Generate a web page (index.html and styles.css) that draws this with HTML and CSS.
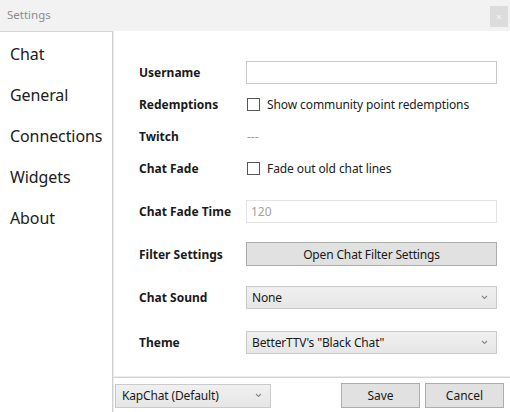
FILE: index.html
```html
<!DOCTYPE html>
<html>
<head>
<meta charset="utf-8">
<link rel="stylesheet" href="styles.css">
</head>
<body>
<div class="window">
  <div class="titlebar">
    <span class="title">Settings</span>
    <span class="close">×</span>
  </div>
  <div class="main">
    <nav class="nav">
      <div class="nav-item">Chat</div>
      <div class="nav-item">General</div>
      <div class="nav-item">Connections</div>
      <div class="nav-item">Widgets</div>
      <div class="nav-item">About</div>
    </nav>
    <div class="pane">
      <div class="form">
        <div class="row r1">
          <div class="label">Username</div>
          <div class="control"><div class="textbox"></div></div>
        </div>
        <div class="row">
          <div class="label">Redemptions</div>
          <div class="control"><span class="check"></span><span class="check-text">Show community point redemptions</span></div>
        </div>
        <div class="row">
          <div class="label">Twitch</div>
          <div class="control"><span class="dim">---</span></div>
        </div>
        <div class="row">
          <div class="label">Chat Fade</div>
          <div class="control"><span class="check"></span><span class="check-text">Fade out old chat lines</span></div>
        </div>
        <div class="row gap">
          <div class="label">Chat Fade Time</div>
          <div class="control"><div class="textbox disabled">120</div></div>
        </div>
        <div class="row gap">
          <div class="label">Filter Settings</div>
          <div class="control"><div class="button wide">Open Chat Filter Settings</div></div>
        </div>
        <div class="row gap">
          <div class="label">Chat Sound</div>
          <div class="control"><div class="select"><span>None</span><span class="chev"><svg width="7" height="5" viewBox="0 0 7 5"><path d="M1 1l2.5 2.5 2.5-2.5" fill="none" stroke="#8a8a8a" stroke-width="1.1"/></svg></span></div></div>
        </div>
        <div class="row gap2">
          <div class="label">Theme</div>
          <div class="control"><div class="select"><span>BetterTTV's "Black Chat"</span><span class="chev"><svg width="7" height="5" viewBox="0 0 7 5"><path d="M1 1l2.5 2.5 2.5-2.5" fill="none" stroke="#8a8a8a" stroke-width="1.1"/></svg></span></div></div>
        </div>
      </div>
      <div class="bottombar">
        <div class="select preset"><span>KapChat (Default)</span><span class="chev"><svg width="7" height="5" viewBox="0 0 7 5"><path d="M1 1l2.5 2.5 2.5-2.5" fill="none" stroke="#8a8a8a" stroke-width="1.1"/></svg></span></div>
        <div class="buttons">
          <div class="button small">Save</div>
          <div class="button small">Cancel</div>
        </div>
      </div>
    </div>
  </div>
</div>
</body>
</html>
```
FILE: styles.css
```css
html, body {
  margin: 0;
  padding: 0;
  background: #ffffff;
}
body {
  font-family: "Noto Sans", "Open Sans", "Liberation Sans", sans-serif;
  color: #1b1b1b;
  font-size: 12px;
}
.window {
  width: 510px;
  height: 412px;
  display: flex;
  flex-direction: column;
  overflow: hidden;
}
.titlebar {
  height: 31px;
  background: #f2f2f2;
  display: flex;
  align-items: center;
  justify-content: space-between;
  padding-left: 7px;
  box-sizing: border-box;
  flex: none;
}
.title {
  color: #8c8c8c;
  font-size: 11.5px;
  margin-top: -2px;
}
.close {
  width: 18px;
  height: 21px;
  margin-right: 2px;
  background: #dcdcdc;
  color: #f4f4f4;
  font-size: 11px;
  display: flex;
  align-items: center;
  justify-content: center;
  margin-top: 2px;
}
.main {
  flex: 1;
  display: flex;
  min-height: 0;
}
.nav {
  width: 113px;
  flex: none;
  box-sizing: border-box;
  border-top: 1px solid #d6d6d6;
  border-right: 1px solid #cfcfcf;
  box-shadow: 1px 0 0 #ececec;
  padding-top: 10px;
  padding-left: 10px;
}
.nav-item {
  font-size: 16px;
  height: 41px;
  line-height: 25px;
  color: #202020;
  letter-spacing: -0.1px;
}
.pane {
  flex: 1;
  display: flex;
  flex-direction: column;
  min-width: 0;
}
.form {
  flex: 1;
  padding: 25px 13px 0 26px;
}
.row {
  display: flex;
  align-items: center;
  height: 32px;
}
.row.gap { margin-top: 11px; }
.row.gap2 { margin-top: 13px; }
.label {
  width: 107px;
  flex: none;
  font-weight: 700;
  font-size: 12px;
  color: #1a1a1a;
}
.control {
  flex: 1;
  display: flex;
  align-items: center;
}
.textbox {
  width: 100%;
  height: 23px;
  box-sizing: border-box;
  border: 1px solid #c9c9c9;
  background: #fff;
  padding-left: 4px;
  line-height: 21px;
}
.textbox.disabled {
  color: #a2a2a2;
  border-color: #e3e3e3;
}
.check {
  width: 13px;
  height: 13px;
  box-sizing: border-box;
  border: 1px solid #555;
  background: #fff;
  margin-left: 1px;
  margin-right: 7px;
  flex: none;
}
.check-text {
  font-size: 12px;
  color: #222;
  letter-spacing: -0.1px;
}
.dim {
  color: #9a9a9a;
  padding-left: 1px;
}
.button {
  box-sizing: border-box;
  border: 1px solid #adadad;
  background: #e1e1e1;
  display: flex;
  align-items: center;
  justify-content: center;
  color: #1a1a1a;
}
.button.wide {
  width: 100%;
  height: 24px;
  letter-spacing: -0.15px;
}
.select {
  width: 100%;
  height: 23px;
  box-sizing: border-box;
  border: 1px solid #cacaca;
  background: linear-gradient(#f0f0f0, #e6e6e6);
  display: flex;
  align-items: center;
  justify-content: space-between;
  padding: 0 8px 0 5px;
  color: #1a1a1a;
  letter-spacing: -0.15px;
}
.chev {
  display: flex;
  align-items: center;
}
.bottombar {
  height: 35px;
  flex: none;
  border-top: 1px solid #d4d4d4;
  box-shadow: 0 -1px 0 #ececec;
  display: flex;
  align-items: center;
  justify-content: space-between;
  padding: 1px 6px 0 2px;
  box-sizing: border-box;
}
.select.preset {
  width: 156px;
  height: 24px;
  padding-left: 6px;
  padding-right: 8px;
}
.buttons {
  display: flex;
  gap: 5px;
}
.button.small {
  width: 79px;
  height: 25px;
}
```
